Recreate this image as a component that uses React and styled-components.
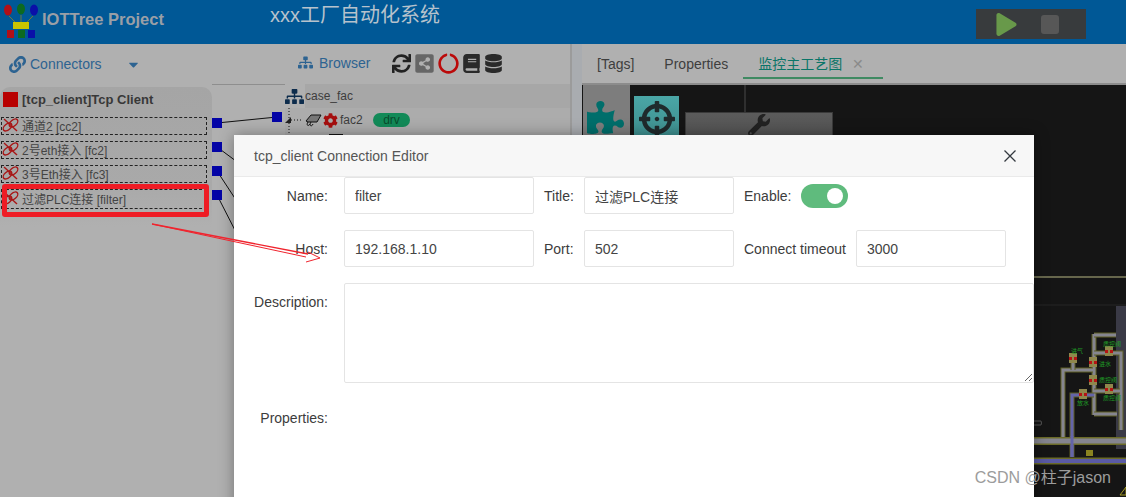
import styled, { createGlobalStyle } from "styled-components";
import {
  FaLink,
  FaCaretDown,
  FaSitemap,
  FaSync,
  FaShareAltSquare,
  FaCircleNotch,
  FaBook,
  FaDatabase,
  FaCog,
  FaPuzzlePiece,
  FaCrosshairs,
  FaWrench,
  FaPlay,
} from "react-icons/fa";

const connectors = [
  { label: "通道2 [cc2]" },
  { label: "2号eth接入 [fc2]" },
  { label: "3号Eth接入 [fc3]" },
  { label: "过滤PLC连接 [filter]", height: 20 },
];

const pipes = [
  { d: "M1094 334V415", color: "#85858f" },
  { d: "M1094 335H1116", color: "#85858f" },
  { d: "M1094 353H1121V430", color: "#85858f" },
  { d: "M1094 391H1120", color: "#85858f" },
  { d: "M1094 414H1117", color: "#85858f" },
  { d: "M1063 437V370H1093", color: "#85858f" },
  { d: "M1073 361V370", color: "#85858f" },
  { d: "M1072 457V395H1094", color: "#6464a8" },
];

const valves = [
  [1109, 351],
  [1073, 358],
  [1093, 362],
  [1093, 380],
  [1109, 389],
  [1083, 394],
];

const plantLabels = [
  { x: 1103, y: 346, text: "质控阀" },
  { x: 1071, y: 353, text: "进气" },
  { x: 1099, y: 366, text: "进水" },
  { x: 1099, y: 382, text: "质控阀" },
  { x: 1103, y: 400, text: "质控阀" },
  { x: 1077, y: 405, text: "放水" },
];

const App = () => {
  return (
    <Page>
      <GlobalStyle />
      <Header>
        <LogoMark />
        <Brand>IOTTree Project</Brand>
        <SystemTitle>xxx工厂自动化系统</SystemTitle>
        <RunBox>
          <FaPlay size={23} color="#68994a" />
          <StopButton />
        </RunBox>
      </Header>
      <Body>
        <LeftColumn>
          <Toolbar>
            <ConnectorsHead>
              <FaLink size={17} />
              Connectors
              <Caret>
                <FaCaretDown size={15} />
              </Caret>
            </ConnectorsHead>
            <BrowserHead>
              <FaSitemap size={15} />
              Browser
            </BrowserHead>
            <ToolIcons>
              <FaSync size={19} color="#222" />
              <FaShareAltSquare size={21} color="#666" />
              <FaCircleNotch size={21} color="#bb0a0a" />
              <FaBook size={19} color="#2a2a2a" />
              <FaDatabase size={19} color="#2a2a2a" />
            </ToolIcons>
          </Toolbar>
          <LeftContent>
            <ConnectorPanel>
              <PanelTitle>
                <RedSquare />
                [tcp_client]Tcp Client
              </PanelTitle>
              {connectors.map((c) => (
                <ConnectorRow key={c.label} $height={c.height || 18}>
                  <BrokenLink />
                  {c.label}
                </ConnectorRow>
              ))}
              <RedHighlight />
            </ConnectorPanel>
            <WireArea>
              <Wires />
            </WireArea>
            <Tree>
              <RootRow>
                <RootIcon>
                  <FaSitemap size={19} />
                </RootIcon>
                <RootLabel>case_fac</RootLabel>
              </RootRow>
              <NodeRow>
                <TreeLines />
                <PlugIcon />
                <FaCog size={15} color="#a50f0f" />
                <NodeLabel>fac2</NodeLabel>
                <Pill>drv</Pill>
              </NodeRow>
              <SubRow>
                <SubMark />
              </SubRow>
            </Tree>
          </LeftContent>
        </LeftColumn>
        <Splitter />
        <RightColumn>
          <Tabs>
            <Tab>[Tags]</Tab>
            <Tab>Properties</Tab>
            <ActiveTab>
              监控主工艺图
              <TabClose>✕</TabClose>
            </ActiveTab>
          </Tabs>
          <Canvas>
            <SideStrip>
              <FaPuzzlePiece size={37} color="#006e6b" />
            </SideStrip>
            <TargetButton>
              <FaCrosshairs size={36} color="#1f2a2c" />
            </TargetButton>
            <ToolPanel>
              <FaWrench size={22} color="#222" />
            </ToolPanel>
            <PanelStem />
            <PlantDrawing />
          </Canvas>
        </RightColumn>
      </Body>

      <Modal>
        <ModalHeader>
          <ModalTitle>tcp_client Connection Editor</ModalTitle>
          <CloseIcon />
        </ModalHeader>
        <FormRow>
          <FieldLabel>Name:</FieldLabel>
          <TextInput $width={190} defaultValue="filter" />
          <SideLabel $width={40}>Title:</SideLabel>
          <TextInput $width={150} defaultValue="过滤PLC连接" />
          <SideLabel $width={57}>Enable:</SideLabel>
          <Toggle />
        </FormRow>
        <FormRow>
          <FieldLabel>Host:</FieldLabel>
          <TextInput $width={190} defaultValue="192.168.1.10" />
          <SideLabel $width={40}>Port:</SideLabel>
          <TextInput $width={150} defaultValue="502" />
          <SideLabel $width={112}>Connect timeout</SideLabel>
          <TextInput $width={150} defaultValue="3000" />
        </FormRow>
        <DescriptionRow>
          <FieldLabel>Description:</FieldLabel>
          <DescriptionInput />
        </DescriptionRow>
        <PropertiesRow>
          <FieldLabel>Properties:</FieldLabel>
        </PropertiesRow>
      </Modal>

      <Annotation />
      <Watermark>CSDN @柱子jason</Watermark>
    </Page>
  );
};

const LogoMark = () => (
  <LogoSvg width="42" height="44" viewBox="0 0 42 44">
    <path d="M9 16L16 23M21 15V23M33 16L26 23" stroke="#6d7a3a" fill="none" />
    <ellipse cx="8" cy="10" rx="4" ry="5.5" fill="#b01018" />
    <ellipse cx="21" cy="9" rx="4" ry="5.5" fill="#0c6a20" />
    <ellipse cx="34" cy="10" rx="4" ry="5.5" fill="#0a10a8" />
    <rect x="13" y="22" width="16" height="7" fill="#c9c400" />
    <rect x="7" y="30" width="7" height="8" fill="#b01018" />
    <rect x="18" y="30" width="7" height="8" fill="#0c6a20" />
    <rect x="28" y="30" width="7" height="8" fill="#0a10a8" />
  </LogoSvg>
);

const BrokenLink = () => (
  <BrokenSvg width="17" height="16" viewBox="0 0 17 16">
    <g fill="none" stroke="#a81616" strokeWidth="1.4">
      <ellipse cx="5.5" cy="10" rx="5" ry="3" transform="rotate(-40 5.5 10)" />
      <ellipse cx="11.5" cy="6" rx="5" ry="3" transform="rotate(-40 11.5 6)" />
      <path d="M2 2L15 14" />
    </g>
  </BrokenSvg>
);

const Wires = () => (
  <svg width="73" height="150" viewBox="212 84 73 150">
    <g stroke="#111" strokeWidth="1" fill="none">
      <path d="M217 123L277 117" />
      <path d="M217 147L240 164" />
      <path d="M217 171L240 206" />
      <path d="M217 195L240 240" />
    </g>
    <g fill="#0404a6">
      <rect x="212" y="118" width="10" height="10" />
      <rect x="272" y="112" width="10" height="10" />
      <rect x="212" y="142" width="10" height="10" />
      <rect x="212" y="166" width="10" height="10" />
      <rect x="212" y="190" width="10" height="10" />
    </g>
  </svg>
);

const TreeLines = () => (
  <TreeLinesSvg width="18" height="28" viewBox="0 0 18 28">
    <path d="M4 0V28M6 12H18" stroke="#111" strokeDasharray="1 2" fill="none" />
    <path d="M0 15L6 9V15Z" fill="#222" />
  </TreeLinesSvg>
);

const PlugIcon = () => (
  <svg width="17" height="15" viewBox="0 0 17 15">
    <path d="M1 8L6 2H16L12 9H3Z" fill="#777" stroke="#111" />
    <path d="M3 9C1 12 3 14 5 11M6 9C4 12 6 15 8 11" fill="none" stroke="#111" />
  </svg>
);

const CloseIcon = () => (
  <CloseSvg width="12" height="12" viewBox="0 0 12 12">
    <path d="M.5.5L11.5 11.5M11.5.5L.5 11.5" stroke="#343a40" strokeWidth="1.3" />
  </CloseSvg>
);

const Annotation = () => (
  <AnnotationSvg width="1126" height="497" viewBox="0 0 1126 497">
    <g fill="none" stroke="#f0242e" strokeWidth="1">
      <path d="M152 224L308 254" strokeWidth="1.4" />
      <path d="M152 224L306 257" />
      <path d="M308 252L320 258L306 262" />
    </g>
  </AnnotationSvg>
);

const PlantDrawing = () => (
  <DrawingSvg width="544" height="412" viewBox="582 85 544 412">
    <path d="M1034 277H1126" stroke="#66664c" strokeWidth="2" />
    <path d="M1034 305H1126" stroke="#262626" />
    <rect x="1116" y="306" width="10" height="143" fill="#3a3a46" />
    {pipes.map((p) => (
      <g key={p.d} fill="none">
        <path d={p.d} stroke="#5f5f24" strokeWidth="5" />
        <path d={p.d} stroke={p.color} strokeWidth="3" />
      </g>
    ))}
    <path d="M1034 441H1126" stroke="#6b6b28" strokeWidth="8" />
    <path d="M1034 441H1126" stroke="#85858f" strokeWidth="5" />
    <path d="M1034 461H1126" stroke="#6b6b28" strokeWidth="7" />
    <path d="M1034 461H1126" stroke="#5a5aa4" strokeWidth="4" />
    <path d="M1072 436V457" stroke="#6464a8" strokeWidth="3" />
    <path d="M1034 421H1041Q1042 423 1041 425H1034" stroke="#555" fill="none" />
    <rect x="1086" y="450" width="7" height="6" fill="#8a8420" />
    <path d="M1120 495L1126 487V495Z" fill="none" stroke="#a59b20" />
    {valves.map(([x, y]) => (
      <g key={`${x}-${y}`}>
        <rect x={x - 4} y={y - 5} width="8" height="10" fill="#8f874c" />
        <rect x={x - 4} y={y - 1} width="3" height="3" fill="#b41414" />
        <rect x={x + 1} y={y - 1} width="3" height="3" fill="#b41414" />
      </g>
    ))}
    {plantLabels.map((l) => (
      <PlantText key={`${l.x}-${l.y}`} x={l.x} y={l.y}>
        {l.text}
      </PlantText>
    ))}
  </DrawingSvg>
);

const GlobalStyle = createGlobalStyle`
  html, body {
    margin: 0;
    padding: 0;
    background: #b0b0b0;
  }
  * {
    box-sizing: border-box;
  }
`;

const Page = styled.div`
  position: relative;
  width: 1126px;
  height: 497px;
  overflow: hidden;
  display: flex;
  flex-direction: column;
  font-family: "Liberation Sans", "Noto Sans CJK SC", sans-serif;
  font-size: 14px;
  color: #333;
`;

const Header = styled.div`
  height: 44px;
  flex: none;
  display: flex;
  align-items: flex-start;
  background: #005896;
`;

const LogoSvg = styled.svg`
  flex: none;
`;

const Brand = styled.div`
  width: 228px;
  margin-top: 8px;
  font-size: 16.5px;
  line-height: 22px;
  font-weight: bold;
  color: #9a9fa6;
`;

const SystemTitle = styled.div`
  width: 706px;
  font-size: 20px;
  line-height: 30px;
  color: #b6c2cc;
`;

const RunBox = styled.div`
  width: 110px;
  height: 30px;
  margin-top: 9px;
  padding-left: 19px;
  display: flex;
  align-items: center;
  gap: 23px;
  background: #383b3d;
`;

const StopButton = styled.div`
  width: 18px;
  height: 19px;
  border-radius: 3px;
  background: #575757;
`;

const Body = styled.div`
  flex: 1;
  display: flex;
  min-height: 0;
`;

const LeftColumn = styled.div`
  width: 570px;
  flex: none;
  display: flex;
  flex-direction: column;
  background: #b0b0b0;
`;

const Toolbar = styled.div`
  height: 40px;
  flex: none;
  display: flex;
  align-items: center;
  color: #2d6391;
`;

const ConnectorsHead = styled.div`
  width: 298px;
  padding-left: 9px;
  display: flex;
  align-items: center;
  gap: 4px;
`;

const Caret = styled.span`
  display: flex;
  margin-left: 20px;
`;

const BrowserHead = styled.div`
  width: 94px;
  display: flex;
  align-items: center;
  gap: 6px;
  margin-top: -3px;
`;

const ToolIcons = styled.div`
  display: flex;
  align-items: center;
  gap: 3px;
  margin-top: -2px;
`;

const LeftContent = styled.div`
  flex: 1;
  display: flex;
  align-items: flex-start;
`;

const ConnectorPanel = styled.div`
  position: relative;
  width: 212px;
  height: 140px;
  flex: none;
  margin-top: 3px;
  padding: 0 0 0 1px;
  border-radius: 10px 10px 0 0;
  background: linear-gradient(#a5a5a5, #a9a9a9 70%, #b0b0b0);
`;

const PanelTitle = styled.div`
  height: 30px;
  padding: 0 0 6px 2px;
  display: flex;
  align-items: center;
  gap: 4px;
  font-size: 13px;
  font-weight: bold;
  color: #383838;
`;

const RedSquare = styled.span`
  width: 15px;
  height: 15px;
  background: #b80000;
`;

const ConnectorRow = styled.div`
  width: 206px;
  height: ${(props) => props.$height}px;
  margin-bottom: 6px;
  padding-bottom: 2px;
  display: flex;
  align-items: center;
  gap: 3px;
  border: 1px dashed #222;
  font-size: 12px;
  color: #444;
`;

const BrokenSvg = styled.svg`
  flex: none;
`;

const RedHighlight = styled.div`
  position: absolute;
  left: 2px;
  top: 97px;
  width: 207px;
  height: 33px;
  border: 5px solid #ee1c25;
  border-radius: 3px;
`;

const WireArea = styled.div`
  width: 73px;
  height: 150px;
  flex: none;
  border-top: 1px solid #8e8e8e;
  svg {
    display: block;
    margin-top: -1px;
  }
`;

const Tree = styled.div`
  flex: 1;
`;

const RootRow = styled.div`
  height: 24px;
  display: flex;
  align-items: center;
`;

const RootIcon = styled.span`
  width: 20px;
  display: flex;
  color: #0d2c4c;
`;

const RootLabel = styled.div`
  flex: 1;
  height: 24px;
  line-height: 24px;
  font-size: 12px;
  color: #3d3d3d;
  background: #a7a7a7;
`;

const NodeRow = styled.div`
  height: 24px;
  display: flex;
  align-items: center;
  gap: 1px;
  background: #acacac;
`;

const TreeLinesSvg = styled.svg`
  flex: none;
  align-self: flex-start;
  margin-right: 1px;
`;

const NodeLabel = styled.span`
  width: 24px;
  margin-left: 1px;
  font-size: 12px;
  color: #3d3d3d;
`;

const Pill = styled.span`
  width: 37px;
  height: 14px;
  margin-left: 8px;
  border-radius: 7px;
  font-size: 12px;
  line-height: 14px;
  text-align: center;
  color: #0a4a2c;
  background: #128a58;
`;

const SubRow = styled.div`
  height: 24px;
  padding: 2px 0 0 44px;
  background: #a9a9a9;
`;

const SubMark = styled.div`
  width: 14px;
  height: 1px;
  background: #111;
`;

const Splitter = styled.div`
  width: 12px;
  flex: none;
  border-left: 2px solid #9b9b9b;
  background: #a9acb0;
`;

const RightColumn = styled.div`
  flex: 1;
  min-width: 0;
  display: flex;
  flex-direction: column;
`;

const Tabs = styled.div`
  height: 41px;
  flex: none;
  display: flex;
  align-items: flex-start;
  padding: 11px 0 0 15px;
  gap: 30px;
  background: #b0b0b0;
  border-bottom: 2px solid #8c8c8c;
`;

const Tab = styled.div`
  font-size: 14px;
  line-height: 18px;
  color: #3e3e3e;
`;

const ActiveTab = styled(Tab)`
  height: 24px;
  width: 140px;
  margin-left: -15px;
  padding-left: 15px;
  color: #0a7568;
  border-bottom: 2px solid #3f8a62;
`;

const TabClose = styled.span`
  margin-left: 10px;
  font-size: 14px;
  color: #8a8a8a;
`;

const Canvas = styled.div`
  position: relative;
  flex: 1;
  min-height: 0;
  display: flex;
  align-items: flex-start;
  background: #151515;
`;

const SideStrip = styled.div`
  width: 47px;
  height: 100%;
  margin-left: 1px;
  padding: 14px 0 0 4px;
  flex: none;
  background: #7d7d7d;
`;

const TargetButton = styled.div`
  width: 45px;
  height: 45px;
  margin: 11px 0 0 4px;
  flex: none;
  display: flex;
  align-items: center;
  justify-content: center;
  background: linear-gradient(#4aa6a6, #3d8c8c);
`;

const ToolPanel = styled.div`
  width: 148px;
  height: 40px;
  margin: 27px 0 0 6px;
  padding: 1px 0 0 62px;
  flex: none;
  background: linear-gradient(#5b5b5b, #4d4d4d);
  border: 1px solid #3a3a3a;
`;

const PanelStem = styled.div`
  width: 2px;
  height: 27px;
  margin-left: -89px;
  flex: none;
  background: #2f2f2f;
`;

const DrawingSvg = styled.svg`
  position: absolute;
  left: 0;
  top: 0;
`;

const PlantText = styled.text`
  font-size: 6px;
  fill: #1f9a25;
`;

const Modal = styled.div`
  position: absolute;
  left: 234px;
  top: 135px;
  width: 800px;
  height: 400px;
  background: #fff;
  box-shadow: 0 0 14px rgba(0, 0, 0, 0.35);
`;

const ModalHeader = styled.div`
  height: 42px;
  display: flex;
  align-items: center;
  justify-content: space-between;
  padding: 0 18px 0 20px;
  background: #f7f7f7;
  border-bottom: 1px solid #eaeaea;
`;

const ModalTitle = styled.div`
  font-size: 14px;
  color: #555;
`;

const CloseSvg = styled.svg`
  flex: none;
`;

const FormRow = styled.div`
  display: flex;
  align-items: center;
  margin-bottom: 16px;
`;

const FieldLabel = styled.div`
  width: 94px;
  margin-right: 16px;
  flex: none;
  text-align: right;
  color: #3c3c3c;
`;

const SideLabel = styled.div`
  width: ${(props) => props.$width}px;
  margin-left: 10px;
  flex: none;
  color: #3c3c3c;
`;

const TextInput = styled.input`
  width: ${(props) => props.$width}px;
  height: 37px;
  padding: 0 10px;
  flex: none;
  font-family: inherit;
  font-size: 14px;
  color: #444;
  background: #fff;
  border: 1px solid #e4e4e4;
  border-radius: 2px;
  outline: none;
`;

const Toggle = styled.div`
  position: relative;
  width: 47px;
  height: 24px;
  border-radius: 12px;
  background: #5fbb7d;

  &::after {
    content: "";
    position: absolute;
    right: 5px;
    top: 4px;
    width: 16px;
    height: 16px;
    border-radius: 50%;
    background: #fff;
  }
`;

const DescriptionRow = styled.div`
  display: flex;
  align-items: flex-start;
  line-height: 38px;
`;

const DescriptionInput = styled.textarea`
  width: 690px;
  height: 100px;
  flex: none;
  display: block;
  background: #fff;
  border: 1px solid #e4e4e4;
  border-radius: 2px;
  outline: none;
`;

const PropertiesRow = styled.div`
  margin-top: 25px;
  line-height: 20px;
`;

const AnnotationSvg = styled.svg`
  position: absolute;
  left: 0;
  top: 0;
  pointer-events: none;
`;

const Watermark = styled.div`
  position: absolute;
  right: 15px;
  top: 469px;
  font-size: 16px;
  line-height: 18px;
  color: #9c9c9c;
`;

export default App;
